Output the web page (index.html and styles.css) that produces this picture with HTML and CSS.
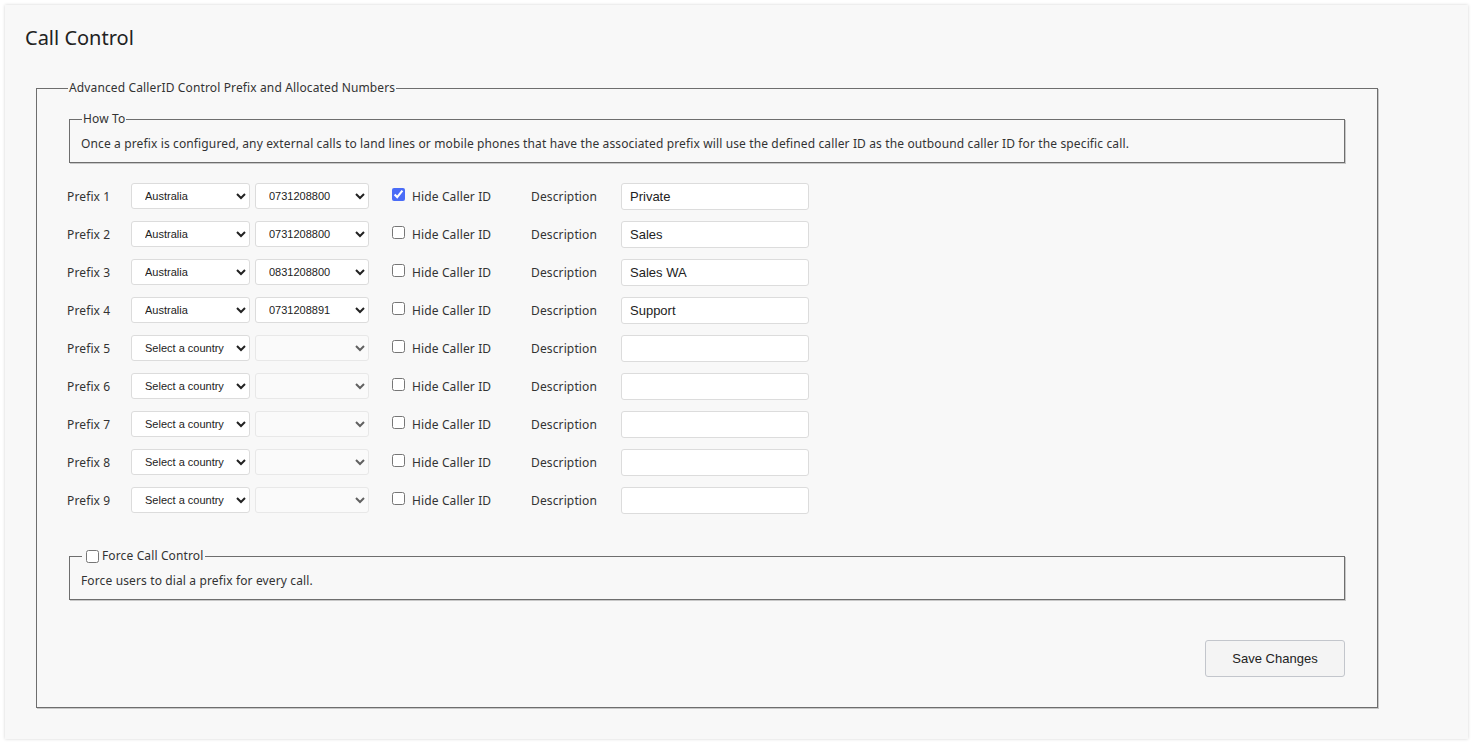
FILE: index.html
```html
<!DOCTYPE html>
<html>
<head>
<meta charset="utf-8">
<title>Call Control</title>
<link rel="stylesheet" href="styles.css">
</head>
<body>
<div class="card">
  <h1 class="title">Call Control</h1>
  <fieldset class="outer">
    <legend class="outer-legend">Advanced CallerID Control Prefix and Allocated Numbers</legend>
    <fieldset class="inner howto">
      <legend class="inner-legend">How To</legend>
      <p class="note">Once a prefix is configured, any external calls to land lines or mobile phones that have the associated prefix will use the defined caller ID as the outbound caller ID for the specific call.</p>
    </fieldset>

    <div class="rows">
      <div class="row">
        <span class="lbl">Prefix 1</span>
        <select class="sel country"><option>Australia</option></select>
        <select class="sel number"><option>0731208800</option></select>
        <label class="hide"><input type="checkbox" class="cb" checked><span>Hide Caller ID</span></label>
        <span class="desc">Description</span>
        <input class="txt" type="text" value="Private">
      </div>
      <div class="row">
        <span class="lbl">Prefix 2</span>
        <select class="sel country"><option>Australia</option></select>
        <select class="sel number"><option>0731208800</option></select>
        <label class="hide"><input type="checkbox" class="cb"><span>Hide Caller ID</span></label>
        <span class="desc">Description</span>
        <input class="txt" type="text" value="Sales">
      </div>
      <div class="row">
        <span class="lbl">Prefix 3</span>
        <select class="sel country"><option>Australia</option></select>
        <select class="sel number"><option>0831208800</option></select>
        <label class="hide"><input type="checkbox" class="cb"><span>Hide Caller ID</span></label>
        <span class="desc">Description</span>
        <input class="txt" type="text" value="Sales WA">
      </div>
      <div class="row">
        <span class="lbl">Prefix 4</span>
        <select class="sel country"><option>Australia</option></select>
        <select class="sel number"><option>0731208891</option></select>
        <label class="hide"><input type="checkbox" class="cb"><span>Hide Caller ID</span></label>
        <span class="desc">Description</span>
        <input class="txt" type="text" value="Support">
      </div>
      <div class="row">
        <span class="lbl">Prefix 5</span>
        <select class="sel country"><option>Select a country</option></select>
        <select class="sel number" disabled><option></option></select>
        <label class="hide"><input type="checkbox" class="cb"><span>Hide Caller ID</span></label>
        <span class="desc">Description</span>
        <input class="txt" type="text" value="">
      </div>
      <div class="row">
        <span class="lbl">Prefix 6</span>
        <select class="sel country"><option>Select a country</option></select>
        <select class="sel number" disabled><option></option></select>
        <label class="hide"><input type="checkbox" class="cb"><span>Hide Caller ID</span></label>
        <span class="desc">Description</span>
        <input class="txt" type="text" value="">
      </div>
      <div class="row">
        <span class="lbl">Prefix 7</span>
        <select class="sel country"><option>Select a country</option></select>
        <select class="sel number" disabled><option></option></select>
        <label class="hide"><input type="checkbox" class="cb"><span>Hide Caller ID</span></label>
        <span class="desc">Description</span>
        <input class="txt" type="text" value="">
      </div>
      <div class="row">
        <span class="lbl">Prefix 8</span>
        <select class="sel country"><option>Select a country</option></select>
        <select class="sel number" disabled><option></option></select>
        <label class="hide"><input type="checkbox" class="cb"><span>Hide Caller ID</span></label>
        <span class="desc">Description</span>
        <input class="txt" type="text" value="">
      </div>
      <div class="row">
        <span class="lbl">Prefix 9</span>
        <select class="sel country"><option>Select a country</option></select>
        <select class="sel number" disabled><option></option></select>
        <label class="hide"><input type="checkbox" class="cb"><span>Hide Caller ID</span></label>
        <span class="desc">Description</span>
        <input class="txt" type="text" value="">
      </div>
    </div>

    <fieldset class="inner force">
      <legend class="inner-legend force-legend"><input type="checkbox" class="cb legend-cb"><span>Force Call Control</span></legend>
      <p class="note">Force users to dial a prefix for every call.</p>
    </fieldset>

    <div class="actions">
      <button class="save" type="button">Save Changes</button>
    </div>
  </fieldset>
</div>
</body>
</html>
```
FILE: styles.css
```css
html, body {
  margin: 0;
  padding: 0;
  background: #ffffff;
}

body {
  font-family: "Noto Sans", "Open Sans", sans-serif;
  font-size: 12px;
  letter-spacing: 0.13px;
  color: #333;
}

.card {
  margin: 5px 9px 5px 5px;
  height: 734px;
  box-sizing: border-box;
  background: #f8f8f8;
  box-shadow: 0 0 3px rgba(0, 0, 0, 0.18);
  padding: 21px 20px 0 20px;
}

.title {
  margin: 0;
  font-family: "Noto Sans", sans-serif;
  font-weight: 400;
  font-size: 20px;
  line-height: 24px;
  letter-spacing: 0;
  color: #222;
}

.outer {
  margin: 31px 0 0 11px;
  width: 1342px;
  box-sizing: border-box;
  border: 1px solid #6e6e6e;
  box-shadow: 1px 1px 0 #c8c8c8;
  padding: 17px 32px 30px 32px;
}

.outer-legend {
  padding: 0 1px;
  margin-left: -1px;
  line-height: 14px;
  color: #333;
}

.inner {
  margin: 0;
  border: 1px solid #6e6e6e;
  box-shadow: 1px 1px 0 #c8c8c8;
  padding: 10px 11px 10px 11px;
}

.inner-legend {
  margin-left: 1px;
  padding: 0 1px;
  line-height: 14px;
}

.note {
  margin: 0;
  line-height: 16px;
  color: #333;
}

.rows {
  display: flex;
  flex-direction: column;
  gap: 12px;
  margin: 20px 0 36px 0;
}

.row {
  display: flex;
  align-items: center;
  height: 26px;
}

.lbl {
  width: 64px;
  margin-left: -2px;
  flex: none;
}

.sel {
  height: 26px;
  box-sizing: border-box;
  border: 1px solid #dcdcdc;
  border-radius: 3px;
  background: #fff;
  font-family: "Liberation Sans", Arial, sans-serif;
  font-size: 11px;
  letter-spacing: 0;
  color: #222;
  padding: 0 0 0 9px;
  flex: none;
}

.sel:disabled {
  background: #fcfcfc;
  border-color: #e2e2e2;
}

.country {
  width: 119px;
}

.number {
  width: 114px;
  margin-left: 5px;
}

.hide {
  display: flex;
  align-items: center;
  width: 139px;
  margin-left: 23px;
  flex: none;
}

.cb {
  width: 13px;
  height: 13px;
  margin: 0 7px 0 0;
  accent-color: #4a6cf7;
  position: relative;
  top: -2px;
}

.desc {
  width: 90px;
  flex: none;
}

.txt {
  width: 188px;
  height: 27px;
  box-sizing: border-box;
  border: 1px solid #dcdcdc;
  border-radius: 3px;
  background: #fff;
  font-family: "Liberation Sans", Arial, sans-serif;
  font-size: 13px;
  letter-spacing: 0;
  color: #222;
  padding: 0 8px;
  flex: none;
}

.force-legend {
  display: flex;
  align-items: center;
}

.legend-cb {
  margin: 0 3px 0 3px;
  top: 0;
}

.actions {
  display: flex;
  justify-content: flex-end;
  margin-top: 40px;
}

.save {
  width: 140px;
  height: 37px;
  border: 1px solid #c3c6cc;
  border-radius: 3px;
  background: #f4f4f4;
  font-family: "Liberation Sans", Arial, sans-serif;
  font-size: 13px;
  letter-spacing: 0;
  color: #222;
}
```
